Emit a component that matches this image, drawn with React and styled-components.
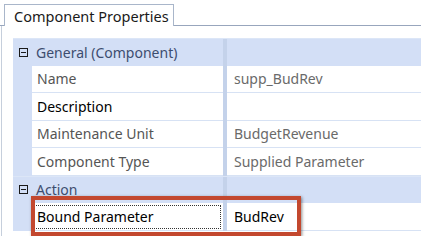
import React from 'react';
import styled, { createGlobalStyle } from 'styled-components';

const Global = createGlobalStyle`
  html, body {
    margin: 0;
    padding: 0;
    background: #ffffff;
  }
  body {
    font-family: "Noto Sans", "Open Sans", sans-serif;
    font-size: 14px;
    width: 421px;
    height: 240px;
    overflow: hidden;
  }
`;

const TabStrip = styled.div`
  display: flex;
  padding-top: 4px;
  height: 26px;
  box-sizing: border-box;
`;

const Edge = styled.div`
  width: ${props => props.w || 'auto'};
  flex: ${props => (props.grow ? 1 : 'none')};
  border-bottom: 1px solid #98a6bd;
`;

const Tab = styled.div`
  display: flex;
  align-items: center;
  width: 170px;
  box-sizing: border-box;
  border: 1px solid #a9b6ca;
  border-bottom: none;
  padding-left: 9px;
  color: #1a1a1a;
  font-size: 14.5px;
  background: #ffffff;
`;

const Panel = styled.div`
  margin-left: 1px;
  border-left: 1px solid #c6cfdc;
  padding: 12px 0 0 11px;
  height: 198px;
  overflow: hidden;
`;

const Grid = styled.div`
  display: flex;
  flex-direction: column;
`;

const Row = styled.div`
  position: relative;
  display: grid;
  grid-template-columns: 19px 191px 4px 1fr;
  height: 27.5px;
  flex: none;
  box-sizing: border-box;
`;

const CategoryRow = styled(Row)`
  background: #d3dff6;
  border-top: 1px solid #dce6f7;
`;

const Gutter = styled.div`
  display: flex;
  align-items: center;
  justify-content: center;
  background: #d3dff6;
`;

const Toggle = styled.div`
  width: 9px;
  height: 9px;
  box-sizing: border-box;
  border: 1px solid #1a1a1a;
  display: flex;
  align-items: center;
  justify-content: center;
  margin-left: 2px;

  &::before {
    content: '';
    width: 5px;
    height: 1px;
    background: #1a1a1a;
  }
`;

const CategoryText = styled.div`
  grid-column: 2 / 3;
  display: flex;
  align-items: center;
  padding-left: 4px;
  color: #3d4d6f;
  white-space: nowrap;
`;

const Splitter = styled.div`
  background: #c4d2ea;
`;

const Cell = styled.div`
  display: flex;
  align-items: center;
  padding-left: ${props => (props.value ? '7px' : '5px')};
  border-bottom: 1px solid #d7e2f4;
  color: ${props => (props.active ? '#000000' : props.value ? '#6a6a6a' : '#555555')};
  white-space: nowrap;
  background: #ffffff;
`;

const FocusCell = styled(Cell)`
  outline: 1px dotted #333333;
  outline-offset: -3px;
`;

const Highlight = styled.div`
  position: absolute;
  left: 18px;
  top: -7px;
  width: 270px;
  height: 40px;
  box-sizing: border-box;
  border: 4px solid #c3482f;
  box-shadow: 1px 1px 3px rgba(0, 0, 0, 0.45);
  pointer-events: none;
`;

const props = [
  { name: 'Name', value: 'supp_BudRev' },
  { name: 'Description', value: '', active: true },
  { name: 'Maintenance Unit', value: 'BudgetRevenue' },
  { name: 'Component Type', value: 'Supplied Parameter' },
];

const Category = ({ title }) => (
  <CategoryRow>
    <Gutter><Toggle /></Gutter>
    <CategoryText>{title}</CategoryText>
    <Splitter />
    <div />
  </CategoryRow>
);

const Property = ({ name, value, active }) => (
  <Row>
    <Gutter />
    <Cell active={active}>{name}</Cell>
    <Splitter />
    <Cell value active={active}>{value}</Cell>
  </Row>
);

export default function App() {
  return (
    <>
      <Global />
      <TabStrip>
        <Edge w='4px' />
        <Tab>Component Properties</Tab>
        <Edge grow />
      </TabStrip>
      <Panel>
        <Grid>
          <Category title='General (Component)' />
          {props.map(p => (
            <Property key={p.name} {...p} />
          ))}
          <Category title='Action' />
          <Row>
            <Gutter />
            <FocusCell active>Bound Parameter</FocusCell>
            <Splitter />
            <Cell value active>BudRev</Cell>
            <Highlight />
          </Row>
        </Grid>
      </Panel>
    </>
  );
}
